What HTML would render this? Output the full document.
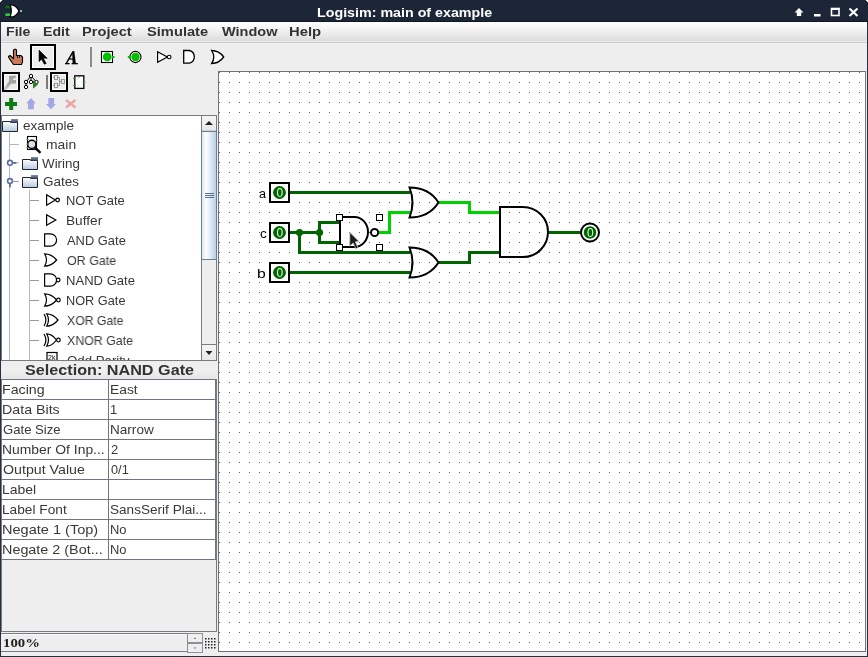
<!DOCTYPE html>
<html><head><meta charset="utf-8">
<style>
*{margin:0;padding:0;box-sizing:border-box}
html,body{width:868px;height:657px;overflow:hidden;background:#eeeeee;position:relative;font-family:"Liberation Sans",sans-serif;color:#333}
.a{position:absolute}
.t{position:absolute;white-space:nowrap;transform-origin:0 0;line-height:1;will-change:transform}
svg{position:absolute;overflow:visible;will-change:transform}
</style></head><body>
<!-- title bar -->
<div class="a" style="left:0;top:0;width:868px;height:22px;background:#1c2637;border-radius:3px 3px 0 0"></div>
<div class="a" style="left:0;top:21px;width:868px;height:1px;background:#101722"></div>
<div class="t" style="left:317.47px;top:6.00px;font:bold 12.6px 'Liberation Sans',sans-serif;color:#ffffff;transform:scaleX(1.1325)">Logisim: main of example</div>
<!-- menubar -->
<div class="a" style="left:1px;top:22px;width:866px;height:19px;background:linear-gradient(#ffffff,#f5f5f5 35%,#dcdcdc)"></div>
<div class="a" style="left:1px;top:41px;width:866px;height:1px;background:#efefef"></div>
<div class="a" style="left:1px;top:42px;width:866px;height:1px;background:#c8c8c8"></div>
<div class="a" style="left:1px;top:43px;width:866px;height:1px;background:#f4f4f4"></div>
<div class="t" style="left:6.28px;top:25.00px;font:bold 12.6px 'Liberation Sans',sans-serif;color:#333;transform:scaleX(1.1238)">File</div>
<div class="t" style="left:43.08px;top:25.00px;font:bold 12.6px 'Liberation Sans',sans-serif;color:#333;transform:scaleX(1.1217)">Edit</div>
<div class="t" style="left:82.14px;top:25.00px;font:bold 12.6px 'Liberation Sans',sans-serif;color:#333;transform:scaleX(1.1643)">Project</div>
<div class="t" style="left:146.60px;top:25.00px;font:bold 12.6px 'Liberation Sans',sans-serif;color:#333;transform:scaleX(1.1654)">Simulate</div>
<div class="t" style="left:222.20px;top:25.00px;font:bold 12.6px 'Liberation Sans',sans-serif;color:#333;transform:scaleX(1.1521)">Window</div>
<div class="t" style="left:289.42px;top:25.00px;font:bold 12.6px 'Liberation Sans',sans-serif;color:#333;transform:scaleX(1.1769)">Help</div>

<!-- title icon & buttons -->
<svg width="868" height="22" style="left:0;top:0">
<rect x="0" y="0" width="2" height="1" fill="#fff"/><rect x="0" y="0" width="1" height="2" fill="#fff"/>
<rect x="866" y="0" width="2" height="1" fill="#fff"/><rect x="867" y="0" width="1" height="2" fill="#fff"/>
<rect x="5.4" y="5.6" width="4.8" height="2.7" fill="#0a6a1a"/>
<rect x="5.4" y="13.4" width="4.8" height="2.6" fill="#22d03a"/>
<path d="M10,4.6 Q16,4.6 19,11 Q16,17.2 10,17.2 Q12.6,11 10,4.6 Z" fill="#fff" stroke="#000" stroke-width="1.2"/>
<rect x="20" y="10" width="2" height="2" fill="#9ab4a8"/>
<path d="M799,8 L803.5,12.5 L801.2,12.5 L801.2,16 L796.8,16 L796.8,12.5 L794.5,12.5 Z" fill="#fff"/>
<rect x="814" y="14" width="6.5" height="2.5" fill="#fff"/>
<rect x="831.5" y="8.5" width="7.5" height="7" fill="none" stroke="#fff" stroke-width="1.6"/>
<rect x="831" y="8" width="8.5" height="2" fill="#fff"/>
<path d="M849.5,8.5 L857.5,16 M857.5,8.5 L849.5,16" stroke="#fff" stroke-width="2.2"/>
</svg>

<!-- toolbar row 1 -->
<svg width="240" height="30" viewBox="0 42 240 30" style="left:0;top:42px">
<path d="M8.5,56.5 L10,55.5 L13.5,58.5 L13.5,50 L14.5,49.3 L15.5,49.3 L16.5,50 L16.5,55.5 L21,55.5 L22.5,57 L22.5,62 L21.5,64.5 L13.5,64.5 L9,58 Z" fill="#c97a5c" stroke="#000" stroke-width="1.1"/>
<path d="M17.5,56 L17.5,58 M19.5,56 L19.5,58" stroke="#000" stroke-width="0.8"/>
<rect x="31" y="45" width="24" height="24" fill="#ececec" stroke="#000" stroke-width="2"/>
<rect x="32.5" y="46.5" width="21" height="21" fill="none" stroke="#fff" stroke-width="1"/>
<path d="M39,50 L47.3,58.3 L43.3,58.3 L46.3,63.5 L44.3,64.3 L41.5,59.3 L39,61.7 Z" fill="#000" stroke="#fff" stroke-width="2" stroke-linejoin="round"/><path d="M39,50 L47.3,58.3 L43.3,58.3 L46.3,63.5 L44.3,64.3 L41.5,59.3 L39,61.7 Z" fill="#000" stroke="#000" stroke-width="0.6" stroke-linejoin="round"/>
<g fill="#000"><path d="M72.2,52.2 L74.2,50.6 L75.8,63.2 L72.6,63.2 Z"/><path d="M73.2,51.4 L66.4,63.2" stroke="#000" stroke-width="1.4"/><rect x="68.6" y="58.4" width="5.4" height="1.2"/><rect x="65" y="63" width="4.6" height="1.3"/><rect x="71.6" y="63" width="6.2" height="1.3"/></g>
<rect x="90" y="47" width="2" height="20" fill="#8a8a8a"/>
<rect x="101.5" y="51.5" width="11" height="11" fill="#fff" stroke="#000" stroke-width="1.1"/>
<circle cx="107.2" cy="56.9" r="4.4" fill="#00c000"/>
<rect x="112" y="56" width="2.5" height="2" fill="#00c000"/>
<circle cx="135.4" cy="57" r="5.6" fill="#fff" stroke="#000" stroke-width="1.1"/>
<circle cx="135.5" cy="57" r="4.2" fill="#00c000"/>
<rect x="127.8" y="56" width="3" height="2" fill="#00c000"/>
<path d="M157.6,51.8 L167.3,57 L157.6,62.3 Z" fill="#fff" stroke="#000" stroke-width="1.2"/>
<circle cx="169.2" cy="57" r="1.8" fill="#fff" stroke="#000" stroke-width="1.1"/>
<path d="M183.7,50.5 L189.5,50.5 A6.6,6.6 0 0 1 189.5,63.2 L183.7,63.2 Z" fill="#fff" stroke="#000" stroke-width="1.3"/>
<path d="M211.6,50.5 Q219,50.5 223.7,57 Q219,63.5 211.6,63.5 Q216,57 211.6,50.5 Z" fill="#fff" stroke="#000" stroke-width="1.3"/>
</svg>

<!-- toolbar row 2/3 -->
<svg width="100" height="45" viewBox="0 70 100 45" style="left:0;top:70px">
<rect x="3" y="73" width="16" height="18" fill="#ececec" stroke="#000" stroke-width="2"/>
<rect x="4.5" y="74.5" width="13" height="15" fill="none" stroke="#fff" stroke-width="1"/>
<defs><linearGradient id="wg" x1="1" y1="0" x2="0" y2="1"><stop offset="0" stop-color="#9c9c9c"/><stop offset="1" stop-color="#c4c4c4"/></linearGradient></defs>
<path d="M5.6,88.4 L10.6,81.6" stroke="url(#wg)" stroke-width="3.2" stroke-linecap="round"/>
<path d="M9,76 L15.8,75.4 L15.8,78 L13.2,78.4 L13.2,80 L16,80 L16,83.6 L11,83.8 L9.2,82 Z" fill="#a4a4a4"/>
<path d="M31,76 L26,82 M31,76 L36.5,82 M31,76 L31,82 M26,82 L26,87" stroke="#000" stroke-width="1"/>
<g fill="#fff" stroke="#000" stroke-width="1"><circle cx="31" cy="76" r="1.7"/><circle cx="26" cy="82" r="1.7"/><circle cx="31" cy="82" r="1.7"/><circle cx="36.5" cy="82" r="1.7"/><circle cx="26" cy="87" r="1.7"/></g>
<path d="M33,80.3 L38,84.5 L33,88.7 Z" fill="#2d7d2d"/>
<rect x="46" y="75" width="2" height="14" fill="#7a7a7a"/>
<rect x="51" y="73" width="16" height="18" fill="#ececec" stroke="#000" stroke-width="2"/>
<rect x="52.5" y="74.5" width="13" height="15" fill="none" stroke="#fff" stroke-width="1"/>
<g fill="none" stroke="#8c8c8c" stroke-width="0.9"><rect x="54.5" y="75.5" width="3" height="4"/><rect x="54.5" y="83.5" width="3" height="4"/><rect x="61.5" y="79.5" width="3" height="4"/><path d="M57.5,77.5 L59.5,77.5 L59.5,85.5 L57.5,85.5 M59.5,81.5 L61.5,81.5 M53,77.5 L54.5,77.5 M53,85.5 L54.5,85.5"/></g>
<rect x="74.8" y="75.8" width="9" height="12.6" fill="#fff" stroke="#000" stroke-width="1.3"/>
<path d="M77.5,76 A1.6,1.6 0 0 0 80.5,76" fill="none" stroke="#666" stroke-width="0.8"/>
<g stroke="#3a9a3a" stroke-width="1.2"><path d="M73,78.5 L76,78.5 M73,85.5 L76,85.5 M82.5,82 L85.5,82"/></g>
<path d="M5,102 L17,102 L17,106 L5,106 Z M9.2,98 L13.2,98 L13.2,110 L9.2,110 Z" fill="#127a12"/>
<path d="M31,98 L35.8,103.2 L33.9,103.2 L33.9,109.3 L28,109.3 L28,103.2 L26.2,103.2 Z" fill="#a3a8e4"/>
<path d="M51,109.3 L55.9,104 L54.1,104 L54.1,98 L48.3,98 L48.3,104 L46,104 Z" fill="#a3a8e4"/>
<path d="M66,100 L75.5,107.5 M75.5,100 L66,107.5" stroke="#eaa5a5" stroke-width="2.4"/>
</svg>



<!-- tree panel -->
<div class="a" style="left:1px;top:115px;width:216px;height:246px;background:#fff;border:1px solid #767c83;border-right:none"></div>
<svg width="220" height="250" viewBox="0 112 220 250" style="left:0;top:112px">
<!-- tree lines -->
<g fill="#b2b6bf">
<rect x="9" y="133" width="1" height="227"/>
<rect x="10" y="144" width="9" height="1"/>
<rect x="29" y="190" width="1" height="170"/>
</g>
<g fill="#959aa3">
<rect x="30" y="200" width="9" height="1"/><rect x="30" y="220" width="9" height="1"/><rect x="30" y="240" width="9" height="1"/><rect x="30" y="260" width="9" height="1"/><rect x="30" y="280" width="9" height="1"/><rect x="30" y="300" width="9" height="1"/><rect x="30" y="320" width="9" height="1"/><rect x="30" y="340" width="9" height="1"/>
</g>
<!-- expand handles -->
<g stroke="#5b6f9e" fill="#fff" stroke-width="1.6">
<circle cx="10" cy="162.8" r="2.4"/>
<circle cx="10" cy="181" r="2.4"/>
</g>
<rect x="12.5" y="162" width="4" height="1.8" fill="#5b6f9e"/>
<rect x="16.5" y="162.3" width="2" height="1" fill="#959aa3"/>
<rect x="9.1" y="183.3" width="1.8" height="4" fill="#5b6f9e"/>
<rect x="12.5" y="181" width="6" height="1" fill="#959aa3"/>
<!-- folders -->
<defs><linearGradient id="fg" x1="0" y1="0" x2="0" y2="1"><stop offset="0" stop-color="#ffffff"/><stop offset="1" stop-color="#b6c8e0"/></linearGradient>
<linearGradient id="ft" x1="0" y1="0" x2="0" y2="1"><stop offset="0" stop-color="#7d90ad"/><stop offset="1" stop-color="#3c4a63"/></linearGradient></defs>
<g id="folder">
<path d="M2.5,121.5 L10.5,121.5 L10.5,122.5 L17.5,122.5 L17.5,131.5 L2.5,131.5 Z" fill="url(#fg)" stroke="#1e2530" stroke-width="1"/>
<rect x="11" y="119" width="7" height="3.5" fill="url(#ft)"/>
</g>
<use href="#folder" transform="translate(20,38)"/>
<use href="#folder" transform="translate(20,56)"/>
<!-- magnifier -->
<rect x="27.5" y="136.5" width="9" height="13" fill="#fff" stroke="#000" stroke-width="1.1"/>
<circle cx="31.8" cy="144.3" r="4.1" fill="#dde0f2" stroke="#000" stroke-width="1.4"/>
<path d="M34.8,147.5 L40.5,152.8" stroke="#000" stroke-width="2.4"/>
<g fill="#4a9a4a"><rect x="26.5" y="139" width="2" height="1"/><rect x="26.5" y="143.5" width="2" height="1"/><rect x="26.5" y="147" width="2" height="1"/><rect x="35.5" y="140" width="2" height="1"/></g>
<!-- gate icons -->
<g fill="#fff" stroke="#000" stroke-width="1.2">
<path d="M46.6,194.8 L55.4,200 L46.6,205.2 Z"/><circle cx="57.6" cy="200" r="1.8"/>
<path d="M46.6,214.8 L55.8,220 L46.6,225.2 Z"/>
<path d="M44.6,233.8 L50.4,233.8 A6.2,6.2 0 0 1 50.4,246.2 L44.6,246.2 Z"/>
<path d="M44.6,253.8 Q51.5,253.8 56.6,260 Q51.5,266.2 44.6,266.2 Q48.4,260 44.6,253.8 Z"/>
<path d="M44.6,273.8 L50.4,273.8 A6.2,6.2 0 0 1 50.4,286.2 L44.6,286.2 Z"/><circle cx="58.2" cy="280" r="1.8"/>
<path d="M44.6,293.8 Q51.5,293.8 56.6,300 Q51.5,306.2 44.6,306.2 Q48.4,300 44.6,293.8 Z"/><circle cx="58.4" cy="300" r="1.8"/>
<path d="M46.6,313.8 Q53,313.8 58,320 Q53,326.2 46.6,326.2 Q50.4,320 46.6,313.8 Z"/>
<path d="M44,314 Q47.8,320 44,326" fill="none"/>
<path d="M46.6,333.8 Q52,333.8 56.4,340 Q52,346.2 46.6,346.2 Q50.4,340 46.6,333.8 Z"/><circle cx="58.4" cy="340" r="1.8"/>
<path d="M44,334 Q47.8,340 44,346" fill="none"/>
<rect x="47" y="352.5" width="10" height="10"/>
</g>
<text x="48" y="360" font-family="Liberation Sans" font-size="7" fill="#000">2k</text>
</svg>
<div class="a" style="left:2px;top:116px;width:199px;height:244px;overflow:hidden">
<div class="a" style="left:-2px;top:-116px;width:220px;height:400px">
<div class="t" style="left:22.80px;top:119.00px;font:12.6px 'Liberation Sans',sans-serif;color:#383838;transform:scaleX(1.0723)">example</div>
<div class="t" style="left:45.50px;top:138.00px;font:12.6px 'Liberation Sans',sans-serif;color:#383838;transform:scaleX(1.1038)">main</div>
<div class="t" style="left:42.00px;top:157.00px;font:12.6px 'Liberation Sans',sans-serif;color:#383838;transform:scaleX(1.0629)">Wiring</div>
<div class="t" style="left:42.60px;top:175.00px;font:12.6px 'Liberation Sans',sans-serif;color:#383838;transform:scaleX(1.0727)">Gates</div>
<div class="t" style="left:65.57px;top:194.00px;font:12.6px 'Liberation Sans',sans-serif;color:#383838;transform:scaleX(1.0286)">NOT Gate</div>
<div class="t" style="left:65.52px;top:214.00px;font:12.6px 'Liberation Sans',sans-serif;color:#383838;transform:scaleX(1.0848)">Buffer</div>
<div class="t" style="left:66.60px;top:234.00px;font:12.6px 'Liberation Sans',sans-serif;color:#383838;transform:scaleX(1.0246)">AND Gate</div>
<div class="t" style="left:66.60px;top:254.00px;font:12.6px 'Liberation Sans',sans-serif;color:#383838;transform:scaleX(0.9880)">OR Gate</div>
<div class="t" style="left:65.56px;top:274.00px;font:12.6px 'Liberation Sans',sans-serif;color:#383838;transform:scaleX(1.0369)">NAND Gate</div>
<div class="t" style="left:65.59px;top:294.00px;font:12.6px 'Liberation Sans',sans-serif;color:#383838;transform:scaleX(1.0121)">NOR Gate</div>
<div class="t" style="left:66.60px;top:314.00px;font:12.6px 'Liberation Sans',sans-serif;color:#383838;transform:scaleX(0.9724)">XOR Gate</div>
<div class="t" style="left:66.60px;top:334.00px;font:12.6px 'Liberation Sans',sans-serif;color:#383838;transform:scaleX(0.9806)">XNOR Gate</div>
<div class="t" style="left:66.60px;top:354.00px;font:12.6px 'Liberation Sans',sans-serif;color:#383838;transform:scaleX(1.0517)">Odd Parity</div>
</div></div>
<!-- tree scrollbar -->
<div class="a" style="left:201px;top:116px;width:16px;height:244px;background:#eeeeee;border-left:1px solid #767c83;border-right:1px solid #767c83"></div>
<div class="a" style="left:202px;top:116px;width:14px;height:15px;background:linear-gradient(#f4f4f4,#e8e8e8);border-bottom:1px solid #c8d0d8"></div>
<svg width="20" height="250" viewBox="200 112 20 250" style="left:200px;top:112px">
<path d="M205,125 L209,121 L213,125 Z" fill="#222"/>
<path d="M205.5,351 L209,355 L212.5,351 Z" fill="#222"/>
</svg>
<div class="a" style="left:201px;top:131px;width:16px;height:129px;background:linear-gradient(90deg,#dde8f3 0%,#ffffff 30%,#b8cfe5 100%);border:1px solid #6b7f98"></div>
<div class="a" style="left:205px;top:193px;width:9px;height:1px;background:#5a6f8e;box-shadow:0 2px 0 #5a6f8e,0 4px 0 #5a6f8e"></div>
<div class="a" style="left:202px;top:344px;width:14px;height:16px;background:linear-gradient(#f4f4f4,#e8e8e8);border-top:1px solid #767c83"></div>
<svg width="20" height="20" viewBox="200 340 20 20" style="left:200px;top:340px">
<path d="M205.5,351 L209,355 L212.5,351 Z" fill="#222"/>
</svg>
<!-- tree bottom border -->
<div class="a" style="left:1px;top:360px;width:216px;height:1px;background:#767c83"></div>

<!-- selection header -->
<div class="a" style="left:1px;top:361px;width:216px;height:18px;background:linear-gradient(#eeeeee,#f0f0f0 50%,#e6e6e6)"></div>
<div class="t" style="left:24.90px;top:362.00px;font:bold 14.5px 'Liberation Sans',sans-serif;color:#333;transform:scaleX(1.1159)">Selection: NAND Gate</div>

<!-- attribute table -->
<div class="a" style="left:1px;top:379px;width:216px;height:253px;border:1px solid #767c83;border-left:none;background:#eeeeee"></div>
<div class="a" style="left:1px;top:380px;width:215px;height:180px;background:#fff"></div>
<div class="a" style="left:1px;top:379px;width:1px;height:253px;background:#767c83"></div>
<svg width="220" height="190" viewBox="0 378 220 190" style="left:0;top:378px">
<g fill="#70767d">
<rect x="2" y="379" width="214" height="1"/>
<rect x="2" y="399" width="214" height="1"/><rect x="2" y="419" width="214" height="1"/><rect x="2" y="439" width="214" height="1"/><rect x="2" y="459" width="214" height="1"/><rect x="2" y="479" width="214" height="1"/><rect x="2" y="499" width="214" height="1"/><rect x="2" y="519" width="214" height="1"/><rect x="2" y="539" width="214" height="1"/><rect x="2" y="559" width="214" height="1"/>
<rect x="108" y="380" width="1" height="180"/>
<rect x="215" y="380" width="1" height="180"/>
</g>
</svg>
<div class="t" style="left:1.87px;top:383.00px;font:12.6px 'Liberation Sans',sans-serif;color:#383838;transform:scaleX(1.1278)">Facing</div>
<div class="t" style="left:109.50px;top:383.00px;font:12.6px 'Liberation Sans',sans-serif;color:#383838;transform:scaleX(1.1000)">East</div>
<div class="t" style="left:1.87px;top:403.00px;font:12.6px 'Liberation Sans',sans-serif;color:#383838;transform:scaleX(1.1300)">Data Bits</div>
<div class="t" style="left:109.57px;top:403.00px;font:12.6px 'Liberation Sans',sans-serif;color:#383838;transform:scaleX(1.0300)">1</div>
<div class="t" style="left:3.00px;top:423.00px;font:12.6px 'Liberation Sans',sans-serif;color:#383838;transform:scaleX(1.0418)">Gate Size</div>
<div class="t" style="left:109.52px;top:423.00px;font:12.6px 'Liberation Sans',sans-serif;color:#383838;transform:scaleX(1.0775)">Narrow</div>
<div class="t" style="left:1.90px;top:443.00px;font:12.6px 'Liberation Sans',sans-serif;color:#383838;transform:scaleX(1.1033)">Number Of Inp...</div>
<div class="t" style="left:110.60px;top:443.00px;font:12.6px 'Liberation Sans',sans-serif;color:#383838;transform:scaleX(1.0300)">2</div>
<div class="t" style="left:3.00px;top:463.00px;font:12.6px 'Liberation Sans',sans-serif;color:#383838;transform:scaleX(1.1278)">Output Value</div>
<div class="t" style="left:110.60px;top:463.00px;font:12.6px 'Liberation Sans',sans-serif;color:#383838;transform:scaleX(1.0118)">0/1</div>
<div class="t" style="left:1.89px;top:483.00px;font:12.6px 'Liberation Sans',sans-serif;color:#383838;transform:scaleX(1.1103)">Label</div>
<div class="t" style="left:1.91px;top:503.00px;font:12.6px 'Liberation Sans',sans-serif;color:#383838;transform:scaleX(1.0881)">Label Font</div>
<div class="t" style="left:109.52px;top:503.00px;font:12.6px 'Liberation Sans',sans-serif;color:#383838;transform:scaleX(1.0784)">SansSerif Plai...</div>
<div class="t" style="left:1.85px;top:523.00px;font:12.6px 'Liberation Sans',sans-serif;color:#383838;transform:scaleX(1.1549)">Negate 1 (Top)</div>
<div class="t" style="left:109.57px;top:523.00px;font:12.6px 'Liberation Sans',sans-serif;color:#383838;transform:scaleX(1.0267)">No</div>
<div class="t" style="left:1.86px;top:543.00px;font:12.6px 'Liberation Sans',sans-serif;color:#383838;transform:scaleX(1.1414)">Negate 2 (Bot...</div>
<div class="t" style="left:109.57px;top:543.00px;font:12.6px 'Liberation Sans',sans-serif;color:#383838;transform:scaleX(1.0267)">No</div>

<!-- zoom field -->
<div class="a" style="left:1px;top:633px;width:187px;height:19px;background:#eeeeee;border-top:1px solid #767c83;border-bottom:1px solid #767c83"></div>
<div class="a" style="left:2px;top:634px;width:185px;height:1px;background:#fafafa"></div>
<div class="t" style="left:2.66px;top:634.50px;font:bold 13.0px 'Liberation Serif',serif;color:#222;transform:scaleX(1.1355)">100%</div>
<div class="a" style="left:187px;top:633px;width:16px;height:10px;background:#eeeeee;border:1px solid #8c9096;border-bottom:none"></div>
<div class="a" style="left:187px;top:642px;width:16px;height:11px;background:#eeeeee;border:1px solid #8c9096;border-top:2px solid #8c9096"></div>
<svg width="30" height="25" viewBox="185 630 30 25" style="left:185px;top:630px">
<path d="M193.5,639 L195,637.5 L196.5,639 Z" fill="#777"/>
<path d="M193.5,647.5 L195,649 L196.5,647.5 Z" fill="#777"/>
<g fill="#222"><rect x="205" y="638" width="1.5" height="1.5"/><rect x="205" y="641" width="1.5" height="1.5"/><rect x="205" y="644" width="1.5" height="1.5"/><rect x="205" y="647" width="1.5" height="1.5"/><rect x="208" y="638" width="1.5" height="1.5"/><rect x="208" y="641" width="1.5" height="1.5"/><rect x="208" y="644" width="1.5" height="1.5"/><rect x="208" y="647" width="1.5" height="1.5"/><rect x="211" y="638" width="1.5" height="1.5"/><rect x="211" y="641" width="1.5" height="1.5"/><rect x="211" y="644" width="1.5" height="1.5"/><rect x="211" y="647" width="1.5" height="1.5"/><rect x="214" y="638" width="1.5" height="1.5"/><rect x="214" y="641" width="1.5" height="1.5"/><rect x="214" y="644" width="1.5" height="1.5"/><rect x="214" y="647" width="1.5" height="1.5"/></g>
</svg>
<!-- canvas -->
<div class="a" style="left:218px;top:71px;width:648px;height:581px;border:1px solid #6e7276;background:#fff"></div>
<svg width="868" height="657" style="left:0;top:0">
<defs><pattern id="dots" x="219" y="72" width="10" height="10" patternUnits="userSpaceOnUse"><rect x="0" y="0" width="1" height="1" fill="#606060"/></pattern></defs>
<rect x="218" y="71" width="648" height="581" fill="url(#dots)"/>
</svg>
<div class="t" style="left:259.30px;top:187.00px;font:12.6px 'Liberation Sans',sans-serif;color:#000;transform:scaleX(0.9571)">a</div>
<div class="t" style="left:259.50px;top:227.00px;font:12.6px 'Liberation Sans',sans-serif;color:#000;transform:scaleX(1.0833)">c</div>
<div class="t" style="left:257.25px;top:267.00px;font:12.6px 'Liberation Sans',sans-serif;color:#000;transform:scaleX(1.2500)">b</div>

<svg width="868" height="657" style="left:0;top:0">
<g fill="none" stroke-width="3" stroke-linecap="square" stroke-linejoin="miter">
<g stroke="#006400">
<path d="M289.5,192.5 H408.5"/>
<path d="M289.5,232.5 H319.5"/>
<path d="M319.5,222.5 V242.5 M319.5,222.5 H338.5 M319.5,242.5 H338.5"/>
<path d="M299.5,232.5 V252.5 H408.5"/>
<path d="M289.5,272.5 H408.5"/>
<path d="M439.5,262.5 H469.5 V252.5 H498.5"/>
<path d="M549.5,232.5 H579.5"/>
</g>
<g stroke="#00d200">
<path d="M379.5,232.5 H389.5 V212.5 H408.5"/>
<path d="M439.5,202.5 H469.5 V212.5 H498.5"/>
</g>
</g>
<g fill="#006400"><circle cx="299.5" cy="232.5" r="3.6"/><circle cx="319.5" cy="232.5" r="3.6"/></g>
<!-- pins -->
<g fill="#fff" stroke="#000" stroke-width="2">
<rect x="270" y="183" width="19" height="19"/>
<rect x="270" y="223" width="19" height="19"/>
<rect x="270" y="263" width="19" height="19"/>
<circle cx="590" cy="232.5" r="9"/>
</g>
<g fill="#006400">
<circle cx="279.5" cy="192.5" r="6.4"/>
<circle cx="279.5" cy="232.5" r="6.4"/>
<circle cx="279.5" cy="272.5" r="6.4"/>
<circle cx="590" cy="232.5" r="6.2"/>
</g>
<g font-family="Liberation Sans" font-size="12" fill="#d8ffd0" text-anchor="middle">
<text x="279.8" y="197">0</text><text x="279.8" y="237">0</text><text x="279.8" y="277">0</text><text x="590.3" y="237">0</text>
</g>
<!-- gates -->
<g fill="none" stroke="#000" stroke-width="2">
<path d="M340,217 H354.5 A13.5,15 0 0 1 354.5,247 H340 Z"/>
<circle cx="374.6" cy="232.5" r="3.6"/>
<path d="M409.5,187.5 Q429,187.5 438.5,202.5 Q429,217.5 409.5,217.5 Q415.5,202.5 409.5,187.5 Z"/>
<path d="M409.5,247.5 Q429,247.5 438.5,262.5 Q429,277.5 409.5,277.5 Q415.5,262.5 409.5,247.5 Z"/>
<path d="M500,207 H523 A25,25 0 0 1 523,257 H500 Z"/>
</g>
<!-- selection handles -->
<g fill="#fff" stroke="#000" stroke-width="1">
<rect x="336.5" y="214.5" width="6" height="6"/><rect x="376.5" y="214.5" width="6" height="6"/>
<rect x="336.5" y="244.5" width="6" height="6"/><rect x="376.5" y="244.5" width="6" height="6"/>
</g>
<!-- cursor -->
<path d="M349.8,232.3 L359,241.5 L355.3,241.8 L358,247.8 L355.8,248.8 L353.1,242.9 L349.8,246.2 Z" fill="#1c1c1c" stroke="#cfcfcf" stroke-width="0.7"/>
</svg>


<!-- window borders -->
<div class="a" style="left:0;top:22px;width:1px;height:635px;background:#263041"></div>
<div class="a" style="left:867px;top:22px;width:1px;height:635px;background:#263041"></div>
<div class="a" style="left:0;top:656px;width:868px;height:1px;background:#263041"></div>
</body></html>
